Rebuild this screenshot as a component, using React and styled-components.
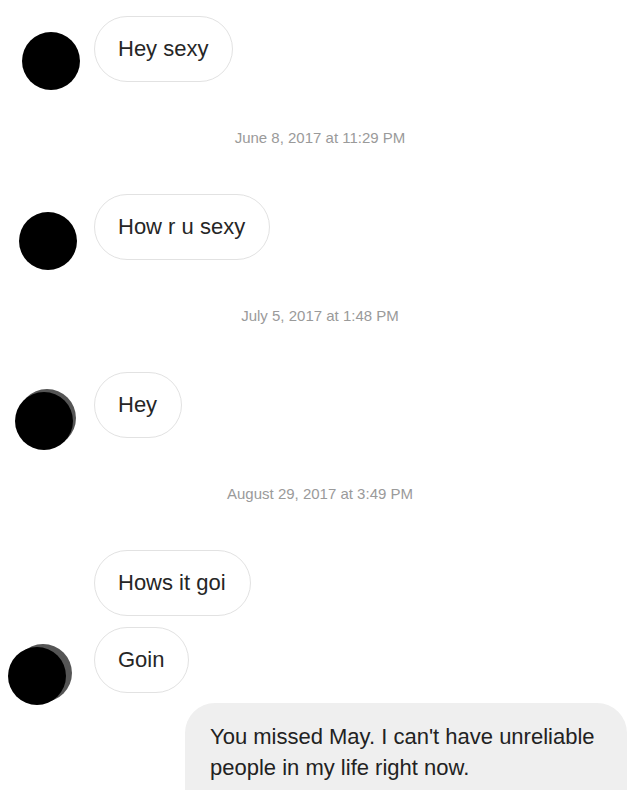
import React from 'react';
import styled, { createGlobalStyle } from 'styled-components';

const Global = createGlobalStyle`
  body {
    margin: 0;
    background: #fff;
    font-family: "Liberation Sans", Arial, sans-serif;
    color: #262626;
  }
`;

const Thread = styled.div`
  width: 640px;
  height: 800px;
  overflow: hidden;
  padding-top: 16px;
  box-sizing: border-box;
  display: flex;
  flex-direction: column;
`;

const Row = styled.div`
  display: flex;
  align-items: flex-end;
  margin-top: ${(p) => p.gap || 0}px;
`;

const AvatarSlot = styled.div`
  width: 94px;
  flex-shrink: 0;
  display: flex;
  align-self: stretch;
  align-items: flex-end;
`;

const Avatar = styled.div`
  width: 58px;
  height: 58px;
  border-radius: 50%;
  background: #000;
  margin-left: ${(p) => p.left}px;
  margin-bottom: -${(p) => p.drop}px;
  box-shadow: ${(p) => p.ghost || 'none'};
`;

const Bubble = styled.div`
  box-sizing: border-box;
  height: 66px;
  padding: 0 24px 0 23px;
  display: flex;
  align-items: center;
  border: 1.5px solid #e2e2e2;
  border-radius: 33px;
  font-size: 22px;
  background: #fff;
`;

const Stamp = styled.div`
  margin: 48px 0;
  text-align: center;
  font-size: 15px;
  line-height: 16px;
  color: #9a9a9a;
`;

const Mine = styled.div`
  box-sizing: border-box;
  height: 87px;
  margin: 10px 13px 0 185px;
  background: #efefef;
  border-radius: 30px 30px 0 0;
  padding: 18px 20px 0 25px;
  font-size: 22px;
  line-height: 31px;
  color: #222;
`;

export default function App() {
  return (
    <>
      <Global />
      <Thread>
        <Row>
          <AvatarSlot>
            <Avatar left={22} drop={8} />
          </AvatarSlot>
          <Bubble>Hey sexy</Bubble>
        </Row>
        <Stamp>June 8, 2017 at 11:29 PM</Stamp>
        <Row>
          <AvatarSlot>
            <Avatar left={19} drop={10} />
          </AvatarSlot>
          <Bubble>How r u sexy</Bubble>
        </Row>
        <Stamp>July 5, 2017 at 1:48 PM</Stamp>
        <Row>
          <AvatarSlot>
            <Avatar left={15} drop={12} ghost="3px -3px 0 #555" />
          </AvatarSlot>
          <Bubble>Hey</Bubble>
        </Row>
        <Stamp>August 29, 2017 at 3:49 PM</Stamp>
        <Row>
          <AvatarSlot />
          <Bubble>Hows it goi</Bubble>
        </Row>
        <Row gap={11}>
          <AvatarSlot>
            <Avatar left={8} drop={12} ghost="6px -3px 0 #555" />
          </AvatarSlot>
          <Bubble>Goin</Bubble>
        </Row>
        <Mine>
          You missed May. I can't have unreliable
          <br />
          people in my life right now.
        </Mine>
      </Thread>
    </>
  );
}
